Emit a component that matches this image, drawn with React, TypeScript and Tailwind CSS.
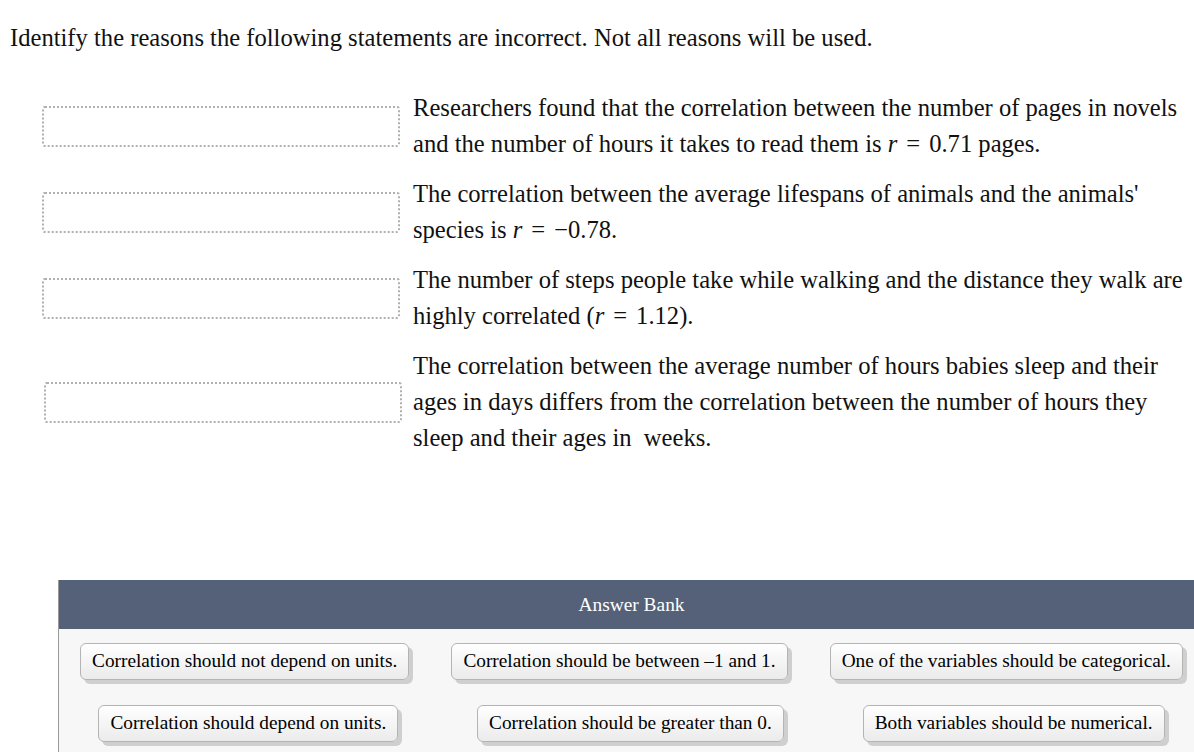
const Eq = () => <span className="mx-[9px]">=</span>

const rows = [
  {
    box: "ml-[42px]",
    text: (
      <>
        Researchers found that the correlation between the number of pages in novels and the number of hours it takes to
        read them is <i>r</i>
        <Eq />
        0.71 pages.
      </>
    ),
  },
  {
    box: "ml-[42px]",
    text: (
      <>
        The correlation between the average lifespans of animals and the animals' species is <i>r</i>
        <Eq />
        −0.78.
      </>
    ),
  },
  {
    box: "ml-[42px]",
    text: (
      <>
        The number of steps people take while walking and the distance they walk are highly correlated (<i>r</i>
        <Eq />
        1.12).
      </>
    ),
  },
  {
    box: "ml-[44px]",
    text: (
      <>
        The correlation between the average number of hours babies sleep and their ages in days differs from the
        correlation between the number of hours they sleep and their ages in&nbsp; weeks.
      </>
    ),
  },
]

const bank = [
  ["Correlation should not depend on units.", "Correlation should be between –1 and 1.", "One of the variables should be categorical."],
  ["Correlation should depend on units.", "Correlation should be greater than 0.", "Both variables should be numerical."],
]

function Chip({ label }: { label: string }) {
  return (
    <div className="rounded-[6px] border border-[#b4b4b4] bg-gradient-to-b from-white to-[#ebebeb] px-[11px] h-[37px] flex items-center text-[19.3px] text-black shadow-[4px_4px_0_0_#cfcfcf] whitespace-nowrap">
      {label}
    </div>
  )
}

export default function App() {
  return (
    <div className="w-[1194px] h-[752px] overflow-hidden bg-white text-[#111] [font-family:Liberation_Serif,serif]">
      <h1 className="pl-[10px] pt-[23px] text-[24.6px] leading-[30px] font-normal">
        Identify the reasons the following statements are incorrect. Not all reasons will be used.
      </h1>

      <div className="mt-[37px] flex flex-col gap-[14px]">
        {rows.map((row, i) => (
          <div key={i} className="flex items-center">
            <div className="w-[413px] shrink-0">
              <div className={`${row.box} w-[358px] h-[41px] rounded-[3px] border-2 border-dotted border-[#b0b0b0]`} />
            </div>
            <p className="w-[779px] text-[24.6px] leading-[36px]">{row.text}</p>
          </div>
        ))}
      </div>

      <div className="mt-[124px] ml-[58px] w-[1146px] border-l border-[#9a9a9a] bg-[#f7f7f7] pb-[30px]">
        <div className="h-[49px] bg-[#546178] flex items-center justify-center text-white text-[19.4px]">Answer Bank</div>
        <div className="pt-[14px] flex flex-col gap-[25px]">
          {bank.map((line, i) => (
            <div key={i} className="flex justify-around">
              {line.map((label) => (
                <Chip key={label} label={label} />
              ))}
            </div>
          ))}
        </div>
      </div>
    </div>
  )
}
